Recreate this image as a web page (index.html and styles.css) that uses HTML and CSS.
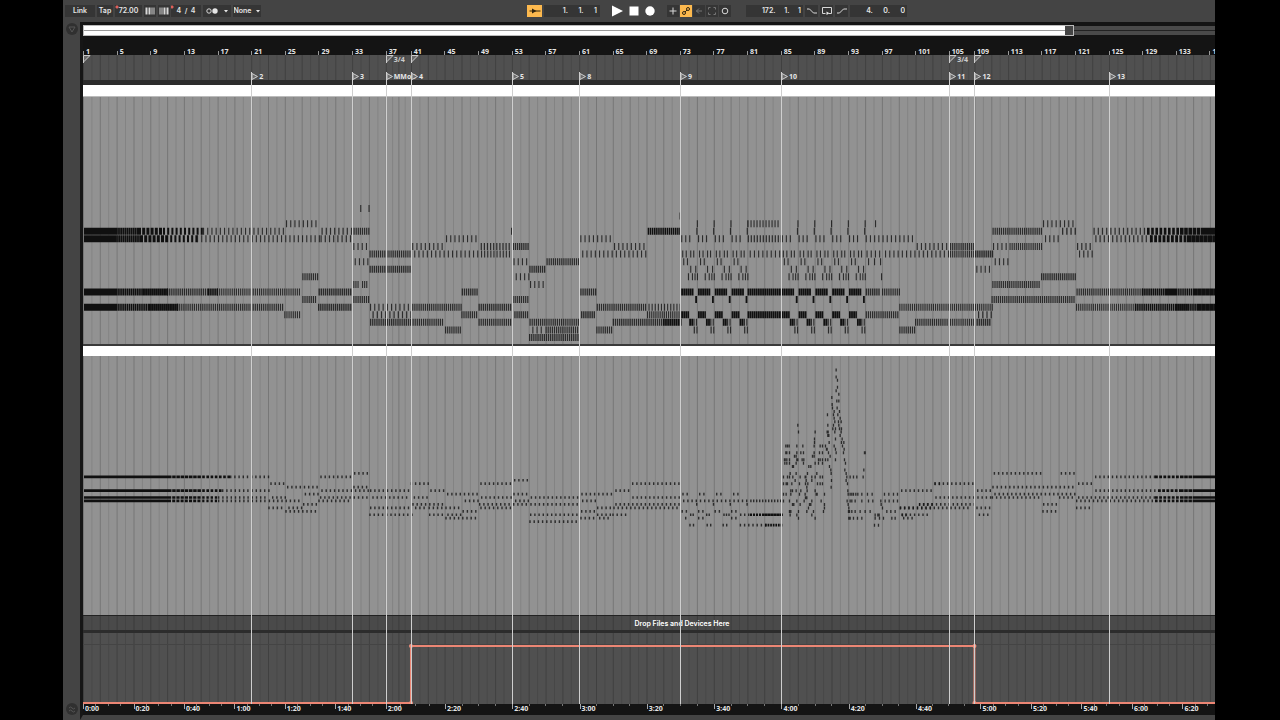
FILE: index.html
```html
<!DOCTYPE html>
<html lang="en">
<head>
<meta charset="utf-8">
<title>Arrangement</title>
<link rel="stylesheet" href="styles.css">
</head>
<body>
<div class="app">
  <header class="transport">
    <div class="group tempo">
      <button class="ctl link">Link</button>
      <button class="ctl tap">Tap</button>
      <input class="ctl bpm" aria-label="Tempo" value="72.00">
      <button class="ctl nudge" aria-label="Nudge down"><svg width="10" height="8"><path d="M1.5 0.500v7M4.500 0.500v7" stroke-width="2"/><path d="M7 0.500v7M9 0.500v7"/></svg></button>
      <button class="ctl nudge" aria-label="Nudge up"><svg width="10" height="8"><path d="M1 0.500v7M3 0.500v7"/><path d="M5.500 0.500v7M8.500 0.500v7" stroke-width="2"/></svg></button>
      <input class="ctl sig" aria-label="Time signature" value="4  /  4">
      <button class="ctl metro" aria-label="Metronome"><svg width="24" height="8"><circle cx="4" cy="4" r="2.2"/><circle class="fill" cx="10" cy="4" r="2.7"/><path class="fill" d="M19 3h4l-2 2.500z"/></svg></button>
      <span class="ctl quant"><select aria-label="Quantization"><option>None</option></select><svg width="6" height="8"><path class="fill" d="M1 3h4l-2 2.500z"/></svg></span>
    </div>
    <div class="group play">
      <button class="ctl on follow" aria-label="Follow"><svg width="12" height="8"><path d="M0.500 4h11"/><path class="fill" d="M3 1.500v5L7.500 4z"/></svg></button>
      <input class="ctl position" aria-label="Arrangement position" value="1.      1.      1">
      <button class="bare" aria-label="Play"><svg width="11" height="12"><path class="solid" d="M0 0.500L11 6 0 11.500z"/></svg></button>
      <button class="bare" aria-label="Stop"><svg width="10" height="12"><path class="solid" d="M0.500 1.500h9v9h-9z"/></svg></button>
      <button class="bare" aria-label="Record"><svg width="10" height="12"><circle class="solid" cx="5" cy="6" r="4.700"/></svg></button>
    </div>
    <div class="group edit">
      <button class="ctl icon" aria-label="Overdub"><svg width="8" height="8"><path d="M4 .5v7M.5 4h7"/></svg></button>
      <button class="ctl icon on" aria-label="Automation arm"><svg width="8" height="8"><path d="M3 5l2-2"/><circle cx="2" cy="6" r="1.500"/><circle cx="6" cy="2" r="1.500"/></svg></button>
      <button class="ctl icon dim" aria-label="Re-enable automation"><svg width="8" height="8"><path d="M1 4h6M4 1.500L1.500 4 4 6.500"/></svg></button>
      <button class="ctl icon dim" aria-label="Capture"><svg width="8" height="8"><path d="M.5 2.500v-2h2M5.500.5h2v2M7.500 5.500v2h-2M2.500 7.500h-2v-2"/></svg></button>
      <button class="ctl icon" aria-label="Session record"><svg width="8" height="8"><circle cx="4" cy="4" r="2.800"/></svg></button>
    </div>
    <div class="group loop">
      <input class="ctl start" aria-label="Loop start" value="172.     1.     1">
      <button class="ctl icon" aria-label="Punch in"><svg width="10" height="8"><path d="M0 2h2.500l4 4H10"/></svg></button>
      <button class="ctl icon" aria-label="Loop"><svg width="10" height="8"><path d="M3.500 6.500H.5v-6h9v6H7"/><path class="fill" d="M4.500 4.500v3.500L7.500 6.300z"/></svg></button>
      <button class="ctl icon" aria-label="Punch out"><svg width="10" height="8"><path d="M0 6h2.500l4-4H10"/></svg></button>
      <input class="ctl length" aria-label="Loop length" value="4.      0.      0">
    </div>
  </header>

  <main class="workspace">
    <aside class="gutter">
      <button class="fold" aria-label="Show browser"><svg width="8" height="8"><path d="M1 2h6L4 7z"/></svg></button>
      <button class="fold" aria-label="Show groove pool"><svg width="8" height="8"><path d="M1 3q1.500-2 3 0t3 0M1 6q1.500-2 3 0t3 0"/></svg></button>
    </aside>
    <section class="arrangement">
      <div class="overview"><div class="view"><i class="grip"></i></div><div class="rest"></div></div>
      <div class="ruler bars" id="bars"></div>
      <div class="timeline">
        <div class="lane scrub"><svg class="grid" id="scrub"></svg></div>
        <div class="divider"></div>
        <div class="clip-head"></div>
        <div class="lane clip upper"><svg class="grid" id="upper"></svg></div>
        <div class="clip-head second"></div>
        <div class="lane clip lower"><svg class="grid" id="lower"></svg></div>
        <div class="lane drop"><svg class="grid" id="drop"></svg><p>Drop Files and Devices Here</p></div>
        <div class="lane automation"><svg class="grid" id="automation"></svg></div>
        <div class="locators" id="locators"></div>
      </div>
      <div class="ruler times" id="times"></div>
    </section>
  </main>
</div>
<script src="arrangement.js"></script>
</body>
</html>
```
FILE: styles.css
```css
* { box-sizing: border-box; }

body {
  margin: 0;
  background: #000;
  color: #e6e6e6;
  font: 600 7px/10px Inter, "Noto Sans", sans-serif;
}

button, input, select {
  margin: 0;
  padding: 0;
  border: 0;
  color: inherit;
  font: inherit;
}

.app {
  display: flex;
  flex-direction: column;
  min-height: 100vh;
  margin: 0 65px 0 63px;
  background: #444;
  overflow: hidden;
}

/* Transport */

.transport {
  display: flex;
  align-items: center;
  height: 22px;
  padding: 0 2px 1px;
}

.group {
  display: flex;
  align-items: center;
  gap: 2px;
  flex: none;
}

.play { margin-left: 266px; }
.edit { margin-left: 12px; gap: 1px; }
.loop { margin-left: 15px; }

.ctl {
  display: flex;
  align-items: center;
  justify-content: center;
  height: 12px;
  background: #353535;
  text-align: center;
}

.transport svg {
  display: block;
  fill: none;
  stroke: #d8d8d8;
  stroke-width: 1;
}

.transport .fill { fill: #e6e6e6; stroke: none; }
.transport .solid { fill: #fff; stroke: none; }
.transport .on { background: #fdb94e; }
.transport .on svg { stroke: #33260f; }
.transport .on .fill { fill: #33260f; }
.transport .dim svg { stroke: #777; }

.link { width: 30px; }
.tap { width: 16px; }
.bpm { width: 27px; background: #353535 radial-gradient(circle at 2px 2px, #e0605a 1px, transparent 2px); }
.nudge { width: 12px; }
.nudge + .nudge { margin-right: -1px; }
.sig { width: 30px; background: #353535 radial-gradient(circle at 1px 2px, #e0605a 1px, transparent 2px); }
.metro { width: 28px; }
.quant { width: 28px; }
.quant select { width: 21px; background: none; appearance: none; }
.follow { width: 15px; }
.position { width: 56px; padding-right: 3px; text-align: right; }
.play .bare { margin-left: 4px; }
.play .position + .bare { margin-left: 10px; }
.bare { background: none; }
.icon { width: 12px; }
.loop .icon { width: 13px; }
.start { width: 57px; padding-right: 2px; text-align: right; }
.length { width: 57px; padding-right: 2px; text-align: right; }

/* Workspace */

.workspace {
  display: flex;
  flex: 1;
}

.gutter {
  display: flex;
  flex-direction: column;
  justify-content: space-between;
  align-items: center;
  width: 17px;
  padding: 1px 0 5px;
}

.fold {
  display: flex;
  align-items: center;
  justify-content: center;
  width: 12px;
  height: 12px;
  border-radius: 50%;
  background: #303030;
}

.fold svg { fill: none; stroke: #555; }

.arrangement {
  display: flex;
  flex: 1;
  flex-direction: column;
  min-width: 0;
  padding-top: 3px;
  border-left: 3px solid #161616;
  border-bottom: 5px solid #444;
  background: #141414;
}

.overview {
  display: flex;
  height: 11px;
}

.view {
  display: flex;
  justify-content: flex-end;
  width: 87.5%;
  border: 1px solid #bbb;
  background: linear-gradient(#fff 4px, #999 4px, #999 5px, #fff 5px);
}

.grip { width: 8px; background: #444; }

.rest {
  flex: 1;
  margin: 1px 0;
  background: linear-gradient(#4a4a4a 4px, #222 4px, #222 5px, #4a4a4a 5px);
}

.ruler {
  display: flex;
  flex: none;
  overflow: hidden;
  white-space: nowrap;
}

.ruler, .locators {
  font-family: "Open Sans", "Noto Sans", sans-serif;
  font-weight: 700;
}

.ruler span { flex: none; }

.bars { height: 19px; align-items: flex-end; }

.bars span {
  padding: 0 0 0 3px;
  height: 8px;
  line-height: 9px;
  background: linear-gradient(#999, #999) 0 100% / 1px 4px no-repeat;
}

.times { height: 11px; }

.times span {
  padding-left: 2px;
  background:
    linear-gradient(#aaa, #aaa) 0 0 / 1px 5px no-repeat,
    linear-gradient(#777, #777) 25% 0 / 1px 2px no-repeat,
    linear-gradient(#777, #777) 50% 0 / 1px 2px no-repeat,
    linear-gradient(#777, #777) 75% 0 / 1px 2px no-repeat;
}

.timeline {
  position: relative;
  display: flex;
  flex: 1;
  flex-direction: column;
  overflow: hidden;
}

.lane {
  position: relative;
  flex: none;
  background: #505050;
  overflow: hidden;
}

.grid {
  position: absolute;
  inset: 0;
  width: 100%;
  height: 100%;
}

.scrub { height: 25px; }
.divider { height: 5px; background: #2c2c2c; }
.clip-head { height: 12px; background: #fff; border-bottom: 1px solid #bbb; }
.second { height: 12px; border-top: 2px solid #3a3a3a; border-bottom: 0; }
.clip { background: #929292; }
.upper { flex: 1 0 247px; }
.lower { flex: 1 0 259px; }

.drop {
  height: 15px;
  border-top: 1px solid #222;
  background: #4a4a4a;
}

.drop p {
  position: relative;
  margin: 0;
  padding: 3px 0 0 66px;
  text-align: center;
  color: #fff;
}

.automation { height: 74px; border-top: 3px solid #2c2c2c; }

.gridline { stroke: #000; stroke-opacity: .1; fill: none; }
.gridline.strong { stroke-opacity: .09; }
.note { fill: #101010; }
.note.thin { fill-opacity: .78; }
.envelope { fill: none; stroke: #ec8674; stroke-width: 2; }
.breakpoint { fill: #f0907e; }
.midline { stroke: #444; }

.locators { position: absolute; inset: 0; }

.locator, .signature {
  position: absolute;
  display: flex;
  align-items: flex-start;
  white-space: nowrap;
}

.locator {
  top: 17px;
  bottom: 0;
  gap: 1px;
  border-left: 1px solid #cfcfcf;
}

.locator svg, .signature svg { flex: none; fill: #6b6b6b; stroke: #ccc; }
.signature { top: 0; gap: 0; color: #ccc; }
```
FILE: arrangement.js
```js
const BAR = 8.41;
const ORIGIN = 83;
const END_BAR = 140;

// Bars 37-40 and 105-108 are in 3/4, all others in 4/4.
const barWidth = n => ((n >= 37 && n < 41) || (n >= 105 && n < 109)) ? BAR * 0.75 : BAR;
const barX = n => {
  let x = 0;
  for (let i = 1; i < n; i++) x += barWidth(i);
  return x;
};

const NS = 'http://www.w3.org/2000/svg';
const add = (svg, tag, cls, attrs) => {
  const el = document.createElementNS(NS, tag);
  el.setAttribute('class', cls);
  for (const k in attrs) el.setAttribute(k, attrs[k]);
  svg.appendChild(el);
  return el;
};

function drawGrid(svg) {
  let all = '', strong = '';
  for (let n = 1; n < END_BAR; n++) {
    const seg = `M${(barX(n) + 0.5).toFixed(1)} 0V900`;
    all += seg;
    if (n % 2) strong += seg;
  }
  add(svg, 'path', 'gridline', { d: all });
  add(svg, 'path', 'gridline strong', { d: strong });
}

const S = 4.2, D = 2.1;

// row: [start, end, step, width]; width equal to step draws a held block
const upper = {
  0: [[360.2, 361, S, 1.1], [368.5, 369, S, 1.1]],
  1: [[679.5, 680, S, 1]],
  2: [[286, 317, S, 1.1], [747.5, 780, 3, 1.1], [875, 876, S, 1.1], [1043, 1074, S, 1.1]],
  3: [[84, 116, 4, 4], [116, 138, D, 1.8], [138, 163, S, 3], [163, 203, S, 2], [203, 284, S, 1.1], [321.5, 352, S, 1.2], [353.5, 369, D, 1.2], [511, 512, S, 1], [647.7, 680, D, 1.5],
    [992.5, 1042.5, D, 1.2], [1062, 1076, S, 1.3], [1093.5, 1147, S, 1.2], [1147, 1180, S, 2.6], [1180, 1202, S, 3.6], [1202, 1216, 4, 4]],
  4: [[84, 114, 4, 4], [114, 140, D, 1.8], [140, 166, S, 3], [166, 197, S, 2], [197, 319, S, 1.1], [320.5, 352, S, 1.2], [446, 477, S, 1.1], [580.3, 611, S, 1.1], [747.7, 781, 3, 1.2], [865.7, 880, S, 1.1], [882.5, 915, S, 1.1],
    [1045, 1059, S, 1.1], [1095.3, 1150, S, 1.2], [1150, 1187, S, 2.8], [1187, 1216, 4.2, 4]],
  5: [[353.3, 367, S, 1.1], [412.2, 444, S, 1.1], [480.7, 511, 3.1, 1.2], [512.7, 529, D, 1.3], [614, 646, S, 1.1], [916.7, 948, S, 1.1], [950, 974, D, 1.2], [993, 1007, S, 1.1], [1009.5, 1041, D, 1.1], [1077, 1092, S, 1.2]],
  6: [[369.5, 411, D, 1.2], [414.2, 480, S, 1.1], [481, 511, 3.1, 1.1], [582.2, 647, S, 1.1], [749.7, 780, S, 1.1], [866.5, 880, S, 1.1], [885, 949, S, 1.1], [950, 975, D, 1.1], [975, 992, D, 1.4], [1079, 1093, S, 1.1]],
  7: [[354.7, 368, S, 1.1], [513.5, 528, S, 1.1], [546.5, 579, D, 1.2], [868, 881, 6, 1.1], [994.7, 1009, S, 1.1]],
  8: [[369.5, 411, D, 1.3], [529.3, 546, D, 1.3], [976.3, 990, S, 1.1]],
  9: [[302.3, 318, D, 1.2], [515.7, 529, S, 1.1], [881, 882, S, 1.1], [1041, 1075, D, 1.3]],
  10: [[353.3, 359, D, 1.1], [362, 368, D, 1.1], [530, 545, S, 1.1], [992.3, 1039, D, 1.2]],
  11: [[84, 116, 4, 4], [116, 143, D, 1.7], [143, 167, D, 1.95], [167, 208, D, 1.3], [208, 217, D, 1.6], [217, 301, D, 1.1], [318.5, 352, D, 1.4], [461.7, 478, D, 1.3], [580.3, 596, D, 1.3], [747.5, 782, D, 1.75], [865.7, 880, D, 1.4], [882, 899, D, 1.2],
    [1076.5, 1142, D, 1.2], [1142, 1165, D, 1.6], [1165, 1176, 4, 4], [1176, 1194, D, 1.5], [1194, 1216, 4, 3.9]],
  12: [[302.3, 317, D, 1.2], [353.3, 369, D, 1.2], [512.5, 529, D, 1.2], [991.5, 1074, D, 1.2]],
  13: [[84, 116, 4, 4], [116, 149, D, 1.6], [149, 177, D, 1.95], [177, 284, D, 1.2], [318, 352, D, 1.4], [370, 411, S, 1.1], [412.2, 461, D, 1.2], [478.5, 511, D, 1.3], [596.7, 646, D, 1.2], [648.5, 680, 3.1, 1.1], [899.3, 992, D, 1.1],
    [1076, 1135, D, 1.1], [1135, 1175, D, 1.5], [1175, 1188, D, 2], [1188, 1198, D, 1.6], [1198, 1216, 4, 3.9]],
  14: [[284.3, 301, D, 1.1], [372.5, 411, S, 1.2], [461.3, 477, D, 1.2], [514.3, 528, D, 1.3], [581, 595.5, D, 1.4], [647, 680, D, 1.1], [747.5, 782, D, 1.75], [865.7, 899, D, 1.2], [978, 992, S, 1.2]],
  15: [[370, 411, D, 1.3], [412.5, 444, D, 1.2], [478.5, 511, D, 1.2], [529.5, 579, D, 1.2], [612.7, 663, D, 1.3], [663, 680, D, 1.75], [915, 948, D, 1.2], [950, 974, D, 1.1], [976.5, 990, D, 1.4]],
  16: [[445, 461, D, 1.2], [532.3, 542, S, 1.1], [545.5, 579, D, 1.2], [596.3, 612, D, 1.2], [899.3, 915, D, 1.2]],
  17: [[529, 579, D, 1.3]]
};

// Two-bar figure repeated in bars 73-80 and 85-94
const figure = [
  [4, 0, 1.1], [4, 4, 1.1], [4, 8, 1.1],
  [6, 1, 1.1], [6, 4.5, 1.1], [6, 9, 1.1], [6, 12, 1.1],
  [7, 2, 1.1], [7, 5.7, 1.1], [8, 9, 1.1], [8, 14, 1.1],
  [9, 6.7, 1.1], [9, 10.7, 1.1], [9, 13.3, 1.1], [9, 15.7, 1.1],
  [2, 15.6, 1.1], [3, 15.1, 1.2],
  [11, 0, 1.8], [11, 2.1, 1.8], [11, 4.2, 1.8], [11, 6.3, 1.8], [11, 8.4, 1.8], [11, 10.5, 1.8],
  [12, 14, 1.8],
  [14, 0, 1.8], [14, 2.1, 1.8], [14, 4.2, 1.8], [14, 6.3, 1.6],
  [15, 8, 1.8], [15, 10.1, 1.8], [15, 12.2, 1.2], [15, 14.7, 1.1],
  [16, 12.5, 1.2], [16, 15.2, 1.1]
];
for (const [start, count] of [[681.2, 4], [781.8, 5]]) {
  for (let i = 0; i < count; i++) {
    for (const [row, dx, w] of figure) {
      const x = start + i * 16.8 + dx;
      upper[row].push([x, x + 0.5, 9, w]);
    }
  }
}

const W = 1.4;
const lower = {
  0: [[354, 369, S, W], [993.7, 1042, S, W], [1060.7, 1075, S, W]],
  1: [[84, 168, 4, 4], [168, 198, S, 3.5], [198, 230, S, 2.6], [230, 268, S, W], [320.3, 352, S, W], [1095, 1155, S, W], [1155, 1180, S, 2.8], [1180, 1196, S, 3.6], [1196, 1216, 4, 4]],
  2: [[514, 528, S, W]],
  3: [[270.3, 284, S, W], [410.7, 428, S, W], [480.3, 511, S, W], [632, 680, S, W], [934.3, 973, S, W], [1078, 1092, S, W]],
  4: [[287, 318, S, W], [353.3, 368, S, W], [992.3, 1075, S, W]],
  5: [[84, 168, 4, 4], [168, 198, S, 3.5], [198, 222, S, 2.6], [222, 269, S, W], [321.3, 369, S, W], [370, 410, S, W], [430.3, 444, S, W], [615.3, 629, S, W], [901, 933, S, W], [977, 991, S, W], [1095.3, 1158, S, W], [1158, 1180, S, 2.8], [1180, 1196, S, 3.6], [1196, 1216, 4, 4]],
  6: [[304.7, 319, S, W], [447, 478, S, W], [513.3, 527, S, W], [581.3, 613, S, W], [682.3, 688, S, W], [699, 705, S, W], [716, 722, S, W], [733, 738, S, W], [994.3, 1075, S, W]],
  7: [[84, 168, 4, 4], [168, 198, S, 3.2], [198, 218, S, 2.4], [218, 268, S, W], [272, 285, S, W], [320, 367, S, W], [372.3, 409, S, W], [413.7, 428, S, W], [481, 511, S, W], [530.7, 579, S, W], [632.3, 680, S, W], [935.3, 991, S, W], [991.7, 1040, S, W], [1059, 1074, S, W], [1078, 1155, S, W], [1155, 1180, S, 2.8], [1180, 1196, S, 3.6], [1196, 1216, 4, 4]],
  8: [[84, 168, 4, 4], [168, 198, S, 3], [198, 218, S, 2.2], [218, 268, S, W], [268.7, 301, S, W], [318.3, 350, S, W], [464.7, 478, S, W], [515, 530, S, W], [582, 596, S, W], [683, 753, S, W], [753, 781, 3, W], [1076, 1155, S, W], [1155, 1180, S, 2.6], [1180, 1196, S, 3.5], [1196, 1216, 4, 4]],
  9: [[303, 317, S, W], [412.3, 445, S, W], [479, 510, S, W], [513, 527, S, W], [530.3, 579, S, W], [615.3, 680, S, W], [696, 747, 16.8, W], [919, 975, S, W], [1043, 1057, S, W]],
  10: [[268.3, 282, S, W], [288.3, 302, S, W], [370, 410, S, W], [415, 427, S, W], [428.5, 460, S, W], [480.3, 510, S, W], [597, 611, S, W], [613.3, 680, S, W], [900, 970, S, W], [976.3, 990, S, W], [1076, 1090, S, W]],
  11: [[285.3, 318, S, W], [462.5, 477, S, W], [581, 594, S, W], [681.5, 688, S, W], [698, 704, S, W], [714.5, 720, S, W], [731, 738, S, W], [1042.3, 1057, S, W]],
  12: [[369.3, 412, S, W], [429, 443, S, W], [447.3, 462, S, W], [530, 578, S, W], [597, 611, S, W], [612.3, 628, S, W], [690, 695, 2.5, W], [706, 711, 2.5, W], [723.3, 729, 2.5, W], [740, 750, 4, W], [750, 762, 3, 2], [762, 781, 3, 2.8], [901.3, 930, S, W], [978.7, 990, S, W]],
  13: [[445.3, 476, S, W], [580.3, 595, S, W], [599, 611, S, W], [685, 686, S, W], [698, 703, S, W], [731, 737, S, W], [903, 913, S, W]],
  14: [[529.3, 578, S, W]],
  15: [[689.3, 694, 3.5, W], [706.5, 711, 3.5, W], [722.5, 729, 3.5, W], [739.7, 765, S, W], [765, 781, 2.6, 1.7]]
};

// Single notes of the solo in bars 85-95: row above the base line, then x in thirds of a pixel from 760
const solo = {
  30: [228], 28: [228], 27: [232], 25: [232], 24: [228], 23: [236], 22: [215], 21: [230, 236], 20: [216],
  19: [217, 231], 18: [222, 238], 17: [202, 220, 233], 16: [222, 240], 15: [224, 235, 243], 14: [113, 203, 220, 236],
  13: [218, 226, 238, 244], 12: [115, 165, 201, 204, 224, 243], 11: [203, 206, 240], 10: [163, 226, 246], 9: [163, 207, 244, 251],
  8: [77, 82, 87, 110, 128, 162, 180, 187, 196, 222, 247], 7: [199, 201, 226, 252], 6: [77, 80, 88, 110, 122, 130, 162, 178, 187, 205, 228, 250, 313, 315],
  5: [103, 108, 157, 162, 210], 4: [73, 75, 80, 88, 110, 113, 126, 131, 175, 180, 187, 196, 203, 226, 253], 3: [74, 80, 88, 108, 130, 165, 175, 187, 256],
  2: [97, 100, 146, 152, 208], 1: [212, 254, 311], 0: [90, 108, 142, 170, 213, 258], '-1': [70, 82, 88, 98, 120, 135, 137, 155, 165, 180, 187, 260, 270, 280, 290, 309],
  '-2': [105, 138, 155, 214, 258], '-3': [70, 78, 82, 95, 118, 136, 143, 172, 180, 187, 262, 525, 538], '-4': [140, 213], '-5': [92, 97, 108, 122, 141, 165, 263],
  '-6': [70, 78, 92, 118, 135, 168, 171, 193, 264, 270, 275, 280, 287, 293, 305, 322, 336, 373, 386, 400, 412], '-7': [136, 140], '-8': [70, 88, 110, 132, 155, 183, 261, 270, 275, 285, 305, 325, 338, 362, 375, 387, 400, 412],
  '-9': [97, 101, 120, 148, 152, 193, 264, 363, 478, 490, 502, 515], '-10': [145, 193, 266, 367, 420, 433, 446, 459, 472, 485, 498, 511],
  '-11': [88, 92, 115, 140, 160, 190, 265, 268, 275, 285, 300, 315, 330, 380, 392, 405], '-12': [90, 110, 155, 345, 353, 357, 427, 437],
  '-13': [115, 165, 266, 270, 280, 292, 305, 345, 358, 370, 395, 405], '-15': [343, 355]
};

const rect = (x, y, w, h) => `M${(x - ORIGIN).toFixed(2)} ${y.toFixed(2)}h${w}v${h}h-${w}z`;

function drawNotes(svg, rows, top, pitch, height) {
  let thick = '', thin = '';
  for (const row in rows) {
    for (const [from, to, step, width] of rows[row]) {
      for (let x = from; x < to; x += step) {
        const r = rect(x, top + row * pitch, Math.min(width, Math.max(1, 1216 - x)), height);
        if (width < 1.5) thin += r; else thick += r;
      }
    }
  }
  add(svg, 'path', 'note', { d: thick });
  add(svg, 'path', 'note thin', { d: thin });
}

const $ = id => document.getElementById(id);
['scrub', 'upper', 'lower', 'drop', 'automation'].forEach(id => drawGrid($(id)));
drawNotes($('upper'), upper, 108, 7.59, 7);
drawNotes($('lower'), lower, 116, 3.45, 2.7);

let d = '';
for (const row in solo) {
  for (const x of solo[row]) d += rect(759.5 + x / 3, 116 - row * 3.45, 1.3, 3);
}
add($('lower'), 'path', 'note thin', { d });

// Automation envelope
const up = barX(41), down = barX(109);
add($('automation'), 'path', 'midline', { d: 'M0 11.5H1400' });
add($('automation'), 'path', 'envelope', { d: `M0 70H${up}V13H${down}V70H1400` });
for (const [x, y] of [[up, 70], [up, 13], [down, 13], [down, 70]]) {
  add($('automation'), 'circle', 'breakpoint', { cx: x, cy: y, r: 2 });
}

// Rulers
const cell = (parent, text, width) => {
  const s = document.createElement('span');
  s.textContent = text;
  s.style.width = width + 'px';
  parent.appendChild(s);
};
for (let n = 1; n <= 137; n += 4) cell($('bars'), n, barX(n + 4) - barX(n));

const timeX = [0, 50.5, 100.9, 151.4, 201.8, 252.3, 302.8, 362, 429.3, 496.6, 563.9, 631.2, 698.5, 765.8, 833, 897.5, 948, 998.5, 1049, 1099.5, 1150];
timeX.slice(0, -1).forEach((x, i) => {
  const s = i * 20;
  cell($('times'), `${Math.floor(s / 60)}:${String(s % 60).padStart(2, '0')}`, timeX[i + 1] - x);
});

// Locators and time signature changes
const marker = (cls, bar, icon, text) => {
  const el = document.createElement('div');
  el.className = cls;
  el.style.left = barX(bar) + 'px';
  el.innerHTML = icon + `<span>${text}</span>`;
  $('locators').appendChild(el);
};
for (const [bar, text] of [[1, ''], [37, '3/4'], [41, ''], [105, '3/4'], [109, '']]) {
  marker('signature', bar, '<svg width="8" height="8"><path d="M.5 8V.5h6.500l-6.500 6.500"/></svg>', text);
}
for (const [bar, text] of [[21, '2'], [33, '3'], [37, 'MMod'], [41, '4'], [53, '5'], [61, '8'], [73, '9'], [85, '10'], [105, '11'], [109, '12'], [125, '13']]) {
  marker('locator', bar, '<svg width="6" height="9"><path d="M0 1.500L5.500 4.500 0 7.500z"/></svg>', text);
}
```
